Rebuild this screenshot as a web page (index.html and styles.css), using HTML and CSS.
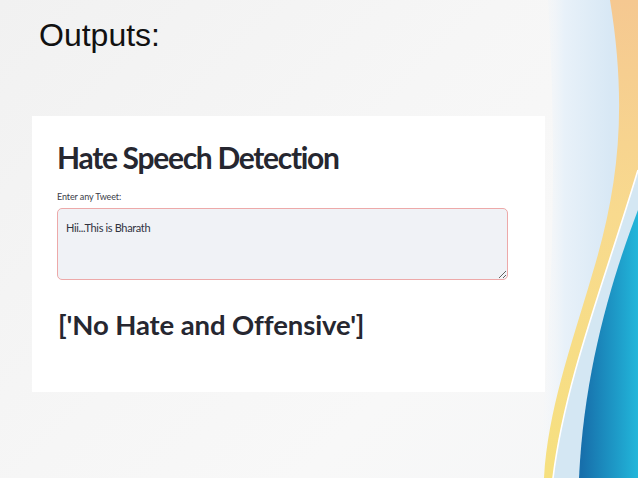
FILE: index.html
```html
<!DOCTYPE html>
<html>
<head>
<meta charset="utf-8">
<link rel="stylesheet" href="styles.css">
</head>
<body>
<div class="slide">
  <svg class="deco" viewBox="0 0 638 478" width="638" height="478" aria-hidden="true">
    <defs>
      <linearGradient id="lb" x1="540" y1="0" x2="610" y2="0" gradientUnits="userSpaceOnUse">
        <stop offset="0" stop-color="#f4f7fa" stop-opacity="0"/>
        <stop offset="0.35" stop-color="#e8f1f9"/>
        <stop offset="1" stop-color="#d8e8f5"/>
      </linearGradient>
      <linearGradient id="og" x1="0" y1="0" x2="0" y2="478" gradientUnits="userSpaceOnUse">
        <stop offset="0" stop-color="#f5c891"/>
        <stop offset="0.45" stop-color="#f8da8e"/>
        <stop offset="1" stop-color="#f6e07f"/>
      </linearGradient>
      <linearGradient id="db" x1="582" y1="0" x2="638" y2="0" gradientUnits="userSpaceOnUse">
        <stop offset="0" stop-color="#176fab"/>
        <stop offset="1" stop-color="#22b6da"/>
      </linearGradient>
    </defs>
    <path d="M548,0 C558,160 552,320 538,478 L638,478 L638,0 Z" fill="url(#lb)"/>
    <path d="M610,0 C628,110 618,190 592,275 C570,350 548,410 544,478 L553,478 C565,380 605,280 638,170 L638,0 Z" fill="url(#og)"/>
    <path d="M553,478 C565,380 605,280 638,170 L638,478 Z" fill="#d4e7f3"/>
    <path d="M553,478 C565,380 605,280 638,170" fill="none" stroke="#ffffff" stroke-width="1.6"/>
    <path d="M638,210 C612,278 584,370 579,478 L638,478 Z" fill="url(#db)"/>
  </svg>
  <h1 class="slide-title">Outputs:</h1>
  <div class="card">
    <h2 class="app-title">Hate Speech Detection</h2>
    <label class="field-label" for="tweet">Enter any Tweet:</label>
    <textarea id="tweet" class="tweet-box" readonly>Hii...This is Bharath</textarea>
    <div class="result">['No Hate and Offensive']</div>
  </div>
</div>
</body>
</html>
```

FILE: styles.css
```css
* { box-sizing: border-box; }
html, body { margin: 0; padding: 0; }
body { width: 638px; height: 478px; overflow: hidden; }

.slide {
  position: relative;
  width: 638px;
  height: 478px;
  background: linear-gradient(135deg, #f1f1f1 0%, #f6f6f6 45%, #f8f8f8 70%, #f5f6f7 100%);
  padding-top: 17px;
}

.deco {
  position: absolute;
  left: 0;
  top: 0;
}

.slide-title {
  position: relative;
  margin: 0;
  padding-left: 39px;
  font-family: "Liberation Sans", Arial, sans-serif;
  font-weight: 400;
  font-size: 32px;
  line-height: 36px;
  color: #111111;
}

.card {
  position: relative;
  margin: 63px 0 0 32px;
  width: 513px;
  height: 276px;
  background: #ffffff;
  padding: 23px 0 0 25px;
  display: flex;
  flex-direction: column;
  align-items: flex-start;
  font-family: Lato, "Open Sans", sans-serif;
  color: #262730;
}

.app-title {
  margin: 0;
  font-weight: 700;
  font-size: 30px;
  line-height: 36px;
  letter-spacing: -1.3px;
}

.field-label {
  margin-top: 15px;
  font-size: 9px;
  line-height: 14px;
  letter-spacing: -0.1px;
  color: #3a3c48;
}

.tweet-box {
  margin-top: 4px;
  width: 451px;
  height: 72px;
  border: 1px solid #eda9a9;
  border-radius: 5px;
  background: #f0f2f6;
  padding: 11px 8px 9px;
  font-family: Lato, "Open Sans", sans-serif;
  font-size: 11px;
  line-height: 16px;
  letter-spacing: -0.35px;
  color: #31333f;
  outline: none;
  resize: vertical;
}

.result {
  margin-top: 29px;
  font-weight: 700;
  font-size: 27.5px;
  line-height: 32px;
  letter-spacing: -0.1px;
  padding-left: 1px;
}
```
